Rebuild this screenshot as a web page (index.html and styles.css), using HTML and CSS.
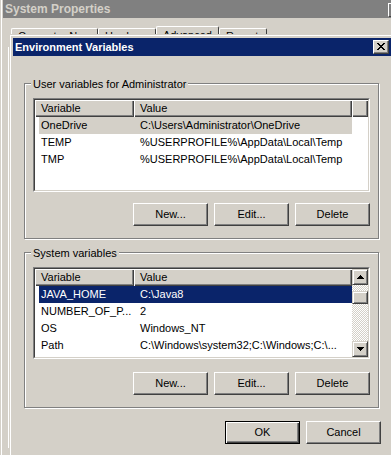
FILE: index.html
```html
<!DOCTYPE html>
<html lang="en">
<head>
    <meta charset="UTF-8">
    <title>Environment Variables</title>
    <link rel="stylesheet" href="styles.css">
</head>
<body>
    <!-- window behind the dialog -->
    <div class="sysprops">
        <div class="sys-title">
            <span>System Properties</span>
            <span class="sys-close"></span>
        </div>
        <div class="tabs">
            <div class="tab tab-name">Computer Name</div>
            <div class="tab tab-hw">Hardware</div>
            <div class="tab tab-adv tab-active">Advanced</div>
            <div class="tab tab-remote">Remote</div>
        </div>
        <div class="tab-page"></div>
    </div>

    <div class="dialog">
        <div class="frame">
            <div class="titlebar">
                <span>Environment Variables</span>
                <div class="close">
                    <svg width="8" height="7" viewBox="0 0 8 7" shape-rendering="crispEdges"><path d="M0 0h2v1H0zM6 0h2v1H6zM1 1h2v1H1zM5 1h2v1H5zM2 2h4v1H2zM3 3h2v1H3zM2 4h4v1H2zM1 5h2v1H1zM5 5h2v1H5zM0 6h2v1H0zM6 6h2v1H6z" fill="#000"/></svg>
                </div>
            </div>

            <div class="dialog-body">
                <!-- User variables -->
                <div class="group">
                    <span class="group-label">User variables for Administrator</span>
                    <div class="list list-user">
                        <div class="list-inner">
                            <div class="list-main">
                                <div class="list-header">
                                    <div class="hcell hcell-var">Variable</div>
                                    <div class="hcell hcell-val">Value</div>
                                    <div class="hcell hcell-fill"></div>
                                </div>
                                <div class="row row-inactive">
                                    <div class="c1">OneDrive</div>
                                    <div class="c2">C:\Users\Administrator\OneDrive</div>
                                </div>
                                <div class="row">
                                    <div class="c1">TEMP</div>
                                    <div class="c2">%USERPROFILE%\AppData\Local\Temp</div>
                                </div>
                                <div class="row">
                                    <div class="c1">TMP</div>
                                    <div class="c2">%USERPROFILE%\AppData\Local\Temp</div>
                                </div>
                            </div>
                        </div>
                    </div>
                    <div class="buttons buttons-user">
                        <button class="btn">New...</button>
                        <button class="btn">Edit...</button>
                        <button class="btn">Delete</button>
                    </div>
                </div>

                <!-- System variables -->
                <div class="group group-system">
                    <span class="group-label">System variables</span>
                    <div class="list list-system">
                        <div class="list-inner">
                            <div class="list-main">
                                <div class="list-header">
                                    <div class="hcell hcell-var">Variable</div>
                                    <div class="hcell hcell-val">Value</div>
                                </div>
                                <div class="row row-selected">
                                    <div class="c1">JAVA_HOME</div>
                                    <div class="c2">C:\Java8</div>
                                </div>
                                <div class="row">
                                    <div class="c1">NUMBER_OF_P...</div>
                                    <div class="c2">2</div>
                                </div>
                                <div class="row">
                                    <div class="c1">OS</div>
                                    <div class="c2">Windows_NT</div>
                                </div>
                                <div class="row">
                                    <div class="c1">Path</div>
                                    <div class="c2">C:\Windows\system32;C:\Windows;C:\...</div>
                                </div>
                            </div>
                            <div class="scrollbar">
                                <div class="sb-btn">
                                    <svg width="7" height="4" viewBox="0 0 7 4" shape-rendering="crispEdges"><path d="M3 0h1v1H3zM2 1h3v1H2zM1 2h5v1H1zM0 3h7v1H0z" fill="#000"/></svg>
                                </div>
                                <div class="sb-track">
                                    <div class="sb-thumb"></div>
                                </div>
                                <div class="sb-btn">
                                    <svg width="7" height="4" viewBox="0 0 7 4" shape-rendering="crispEdges"><path d="M0 0h7v1H0zM1 1h5v1H1zM2 2h3v1H2zM3 3h1v1H3z" fill="#000"/></svg>
                                </div>
                            </div>
                        </div>
                    </div>
                    <div class="buttons buttons-system">
                        <button class="btn">New...</button>
                        <button class="btn">Edit...</button>
                        <button class="btn">Delete</button>
                    </div>
                </div>

                <div class="dialog-buttons">
                    <button class="btn btn-default">OK</button>
                    <button class="btn">Cancel</button>
                </div>
            </div>
        </div>
    </div>
</body>
</html>
```

FILE: styles.css
```css
/* Classic Windows look */
body {
    margin: 0;
    width: 391px;
    height: 455px;
    overflow: hidden;
    position: relative;
    background: #d4d0c8;
    font-family: "Liberation Sans", Arial, sans-serif;
    font-size: 11px;
    color: #000;
}

/* Window behind */
.sysprops {
    height: 455px;
    margin-left: 1px;
    padding-left: 1px;
    border-left: 1px solid #fff;
}

.sys-title {
    height: 18px;
    line-height: 18px;
    padding-left: 2px;
    background: #808080;
    color: #d4d0c8;
    font-size: 12px;
    font-weight: bold;
    display: flex;
    justify-content: space-between;
}

.sys-close {
    width: 16px;
    height: 14px;
    margin: 3px -13px 0 0;
    box-sizing: border-box;
    border: 1px solid;
    border-color: #fff #404040 #404040 #fff;
}

.tabs {
    height: 29px;
    padding-left: 8px;
    display: flex;
    align-items: flex-end;
}

.tab {
    height: 19px;
    box-sizing: border-box;
    padding: 1px 0 0 6px;
    line-height: 13px;
    border: 1px solid;
    border-color: #fff #404040 transparent #fff;
    border-bottom: none;
    border-radius: 2px 2px 0 0;
    white-space: nowrap;
    overflow: hidden;
}

.tab-name { width: 87px; }
.tab-hw { width: 58px; }
.tab-adv { width: 63px; }
.tab-remote { width: 48px; }

.tab-active {
    height: 21px;
    padding-top: 2px;
}

.tab-page {
    height: 400px;
    margin-left: 5px;
    border-left: 1px solid #fff;
    border-top: 1px solid #fff;
}

/* Dialog */
.dialog {
    position: absolute;
    left: 9px;
    top: 34px;
    width: 386px;
    height: 440px;
    box-sizing: border-box;
    border: 1px solid;
    border-color: #d4d0c8 #404040 #404040 #d4d0c8;
    background: #d4d0c8;
}

.frame {
    height: 100%;
    box-sizing: border-box;
    padding: 2px;
    border: 1px solid;
    border-color: #fff #808080 #808080 #fff;
}

.titlebar {
    height: 18px;
    line-height: 18px;
    padding-left: 2px;
    background: #0a246a;
    color: #fff;
    font-weight: bold;
    display: flex;
    justify-content: space-between;
    align-items: flex-start;
}

.close {
    width: 16px;
    height: 14px;
    margin: 2px 2px 0 0;
    box-sizing: border-box;
    border: 1px solid;
    border-color: #fff #404040 #404040 #fff;
    box-shadow: inset -1px -1px #808080;
    background: #d4d0c8;
    display: flex;
    align-items: center;
    justify-content: center;
}

.close svg {
    margin-top: -1px;
}

.dialog-body {
    padding: 27px 10px 0 11px;
}

/* Group boxes */
.group {
    position: relative;
    width: 355px;
    box-sizing: border-box;
    padding: 14px 8px 12px;
    border: 1px solid #808080;
    box-shadow: inset 1px 1px #fff, 1px 1px #fff;
}

.group-system {
    margin-top: 13px;
}

.group-label {
    position: absolute;
    left: 6px;
    top: -6px;
    padding: 0 2px;
    line-height: 13px;
    background: #d4d0c8;
}

/* List views */
.list {
    box-sizing: border-box;
    border: 1px solid;
    border-color: #808080 #fff #fff #808080;
}

.list-user { height: 94px; }
.list-system { height: 92px; }

.list-inner {
    height: 100%;
    box-sizing: border-box;
    border: 1px solid;
    border-color: #404040 #d4d0c8 #d4d0c8 #404040;
    background: #fff;
    display: flex;
}

.list-main {
    flex: 1;
    min-width: 0;
}

.list-header {
    height: 17px;
    display: flex;
}

.hcell {
    height: 17px;
    line-height: 17px;
    box-sizing: border-box;
    padding-left: 6px;
    background: #d4d0c8;
    box-shadow: inset 1px 1px #fff, inset -1px -1px #404040, inset -2px -2px #808080;
}

.hcell-var { width: 99px; }
.hcell-val { width: 218px; }
.hcell-fill { flex: 1; }

.row {
    width: 313px;
    height: 17px;
    line-height: 17px;
    margin-left: 4px;
    display: flex;
    white-space: nowrap;
}

.c1 {
    width: 95px;
    padding-left: 2px;
    box-sizing: border-box;
    overflow: hidden;
}

.c2 {
    width: 218px;
    padding-left: 6px;
    box-sizing: border-box;
    overflow: hidden;
}

.row-inactive {
    background: #d4d0c8;
}

.row-selected {
    background: #0a246a;
    color: #fff;
}

/* Scrollbar */
.scrollbar {
    width: 16px;
    display: flex;
    flex-direction: column;
    background: repeating-conic-gradient(#fff 0 25%, #d4d0c8 0 50%) 0 0 / 2px 2px;
}

.sb-btn,
.sb-thumb {
    box-sizing: border-box;
    border: 1px solid;
    border-color: #d4d0c8 #404040 #404040 #d4d0c8;
    box-shadow: inset 1px 1px #fff, inset -1px -1px #808080;
    background: #d4d0c8;
}

.sb-btn {
    height: 16px;
    display: flex;
    align-items: center;
    justify-content: center;
}

.sb-track {
    flex: 1;
}

.sb-thumb {
    height: 13px;
    margin-top: 6px;
}

/* Buttons */
.buttons,
.dialog-buttons {
    display: flex;
    justify-content: flex-end;
    gap: 6px;
}

.buttons-user { margin-top: 11px; }
.buttons-system { margin-top: 13px; }

.dialog-buttons {
    width: 357px;
    margin-top: 13px;
}

.btn {
    width: 75px;
    height: 23px;
    padding: 0;
    box-sizing: border-box;
    border: 1px solid;
    border-color: #fff #404040 #404040 #fff;
    box-shadow: inset -1px -1px #808080;
    background: #d4d0c8;
    font-family: inherit;
    font-size: 11px;
    color: #000;
    line-height: 21px;
    text-align: center;
}

.btn-default {
    border-color: #000;
    box-shadow: inset 1px 1px #fff, inset -1px -1px #404040, inset -2px -2px #808080;
}
```
